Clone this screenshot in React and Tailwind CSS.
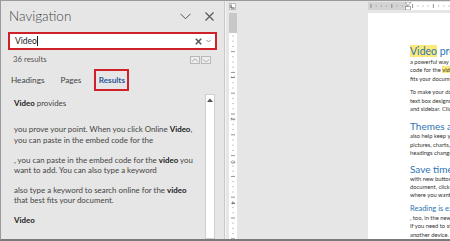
import React from 'react';

const font = { fontFamily: 'Lato, "Open Sans", sans-serif' };

function VRuler() {
  const ticks = [];
  for (let y = 36; y < 241; y += 5.2) ticks.push(y);
  return (
    <svg width="8" height="228" viewBox="0 0 8 228" className="block overflow-visible">
      <rect x="0" y="0" width="8" height="228" fill="#ffffff" />
      <rect x="0" y="0" width="8" height="20" fill="#c8c8c8" />
      {ticks.map((t, i) => (
        <line key={i} x1={i % 4 === 3 ? 2 : 3.5} x2={i % 4 === 3 ? 6 : 4.5} y1={t - 13} y2={t - 13} stroke="#777" strokeWidth="0.8" />
      ))}
      {[['1', 64], ['2', 106], ['3', 149], ['4', 190]].map(([n, y]) => (
        <text key={n} x="4" y={y + 2} fontSize="5.5" fill="#444" textAnchor="middle" transform={`rotate(90 4 ${y})`} style={font}>{n}</text>
      ))}
    </svg>
  );
}

function HRuler() {
  const ticks = [];
  for (let x = 3; x < 82; x += 5.2) ticks.push(x);
  return (
    <svg width="82" height="8" viewBox="0 0 82 8" className="block">
      <rect x="0" y="0" width="82" height="8" fill="#ffffff" />
      <rect x="0" y="0" width="40" height="8" fill="#d4d4d4" />
      {ticks.map((t, i) => (
        <line key={i} x1={t} x2={t} y1={i % 4 === 0 ? 2 : 3.5} y2={i % 4 === 0 ? 6 : 4.5} stroke="#777" strokeWidth="0.8" />
      ))}
      <path d="M37 0 L43 0 L40 4 Z" fill="#fff" stroke="#777" strokeWidth="0.6" />
      <rect x="37.5" y="4.5" width="5" height="3.5" fill="#fff" stroke="#777" strokeWidth="0.6" />
    </svg>
  );
}

function Hi({ children }) {
  return <span className="bg-[#fbe97a]">{children}</span>;
}

function NavPane() {
  return (
    <div className="w-[224px] shrink-0 flex flex-col bg-[#e6e6e6] border-r border-[#c9c9c9] overflow-hidden" style={font}>
      {/* header */}
      <div className="h-[31px] shrink-0 flex items-center justify-between pl-[8px] pr-[10px]">
        <span className="text-[13.5px] font-light text-[#444] leading-none">Navigation</span>
        <div className="flex items-center gap-[14px] text-[#555]">
          <svg width="11" height="7" viewBox="0 0 11 7"><path d="M0.5 0.8 L5.5 5.8 L10.5 0.8" fill="none" stroke="#555" strokeWidth="1" /></svg>
          <svg width="9" height="9" viewBox="0 0 9 9"><path d="M0.5 0.5 L8.5 8.5 M8.5 0.5 L0.5 8.5" fill="none" stroke="#555" strokeWidth="1.1" /></svg>
        </div>
      </div>

      {/* search */}
      <div className="mx-[7px] h-[18px] shrink-0 border-2 border-[#d0202a] bg-white flex items-center pl-[5px] pr-[4px]">
        <span className="text-[8.5px] text-[#222] leading-none">Video</span>
        <span className="w-px h-[10px] bg-[#222]" />
        <span className="flex-1" />
        <svg width="7" height="7" viewBox="0 0 7 7"><path d="M0.8 0.8 L6.2 6.2 M6.2 0.8 L0.8 6.2" stroke="#555" strokeWidth="1.6" /></svg>
        <svg width="5" height="4" viewBox="0 0 5 4" className="ml-[4px]"><path d="M0.5 1 L2.5 3 L4.5 1" fill="none" stroke="#777" strokeWidth="0.8" /></svg>
      </div>

      {/* results count */}
      <div className="h-[18px] shrink-0 flex items-center justify-between pl-[12px] pr-[13px] mt-[1px]">
        <span className="text-[7.8px] text-[#555]">36 results</span>
        <div className="flex gap-[1px]">
          {['M1 5 L5 1.5 L9 5', 'M1 2 L5 5.5 L9 2'].map((d) => (
            <div key={d} className="w-[10px] h-[8px] border border-[#b8b8b8] bg-[#eee] flex items-center justify-center">
              <svg width="10" height="7" viewBox="0 0 10 7"><path d={d} fill="none" stroke="#999" strokeWidth="0.9" /></svg>
            </div>
          ))}
        </div>
      </div>

      {/* tabs */}
      <div className="h-[22px] shrink-0 flex items-center pl-[10px] text-[8.2px] text-[#444]">
        <span>Headings</span>
        <span className="ml-[16px]">Pages</span>
        <span className="ml-[13px] h-[22px] w-[35px] flex items-center justify-center border-2 border-[#d0202a] font-bold text-[#2b579a]">Results</span>
      </div>

      {/* list */}
      <div className="flex-1 min-h-0 flex pt-[3px] pr-[9px]">
        <div className="flex-1 pl-[13px] pr-[4px] pt-[4px] text-[7.9px] leading-[10.5px] text-[#444] whitespace-nowrap overflow-hidden">
          <p><b className="text-[#222]">Video</b> provides</p>
          <p className="mt-[15.5px]">you prove your point. When you click Online <b className="text-[#222]">Video</b>,</p>
          <p>you can paste in the embed code for the</p>
          <p className="mt-[9.5px]">, you can paste in the embed code for the <b className="text-[#222]">video</b> you</p>
          <p>want to add. You can also type a keyword</p>
          <p className="mt-[9px]">also type a keyword to search online for the <b className="text-[#222]">video</b></p>
          <p>that best fits your document.</p>
          <p className="mt-[9.5px]"><b className="text-[#222]">Video</b></p>
        </div>
        <div className="w-[10px] bg-white border border-[#cfcfcf] flex flex-col">
          <div className="h-[9px] flex items-center justify-center">
            <svg width="6" height="4" viewBox="0 0 6 4"><path d="M0 4 L3 0.5 L6 4 Z" fill="#555" /></svg>
          </div>
        </div>
      </div>
    </div>
  );
}

function Page() {
  const body = 'text-[5.8px] leading-[8.4px] text-[#333] whitespace-nowrap';
  return (
    <div className="flex-1 bg-white pl-[42px] pt-[32px] overflow-hidden" style={font}>
      <div className="text-[10.5px] leading-[13px] text-[#2e74b5] whitespace-nowrap"><Hi>Video</Hi> provides</div>
      <div className={body}>a powerful way to help you</div>
      <div className={body}>code for the <Hi>video</Hi> you want</div>
      <div className={body}>fits your document.</div>
      <div className={`${body} mt-[5px]`}>To make your document look</div>
      <div className={body}>text box designs that comple</div>
      <div className={body}>and sidebar. Click Insert</div>
      <div className="mt-[7px] text-[10px] leading-[12px] text-[#2e74b5] whitespace-nowrap">Themes and styles</div>
      <div className={body}>also help keep your document</div>
      <div className={body}>pictures, charts, and SmartArt</div>
      <div className={body}>headings change to match</div>
      <div className="mt-[5px] text-[10px] leading-[12px] text-[#2e74b5] whitespace-nowrap">Save time in Word</div>
      <div className={body}>with new buttons that show</div>
      <div className={body}>document, click where you</div>
      <div className={body}>where you want to add</div>
      <div className="mt-[4px] text-[7.5px] leading-[10px] text-[#2e74b5] whitespace-nowrap">Reading is easier</div>
      <div className={body}>, too, in the new Reading</div>
      <div className={body}>If you need to stop reading</div>
      <div className={body}>another device.</div>
    </div>
  );
}

export default function App() {
  return (
    <div className="w-[450px] h-[241px] flex overflow-hidden bg-[#e6e6e6] border-t border-l border-[#9a9a9a] border-b-2 border-b-[#7a7a7a]">
      <NavPane />
      <div className="w-[14px] shrink-0 flex flex-col items-center bg-[#e6e6e6] border-l border-[#f4f4f4]">
        <div className="mt-[2px] w-[7px] h-[7px] bg-white border border-[#bbb] flex items-end justify-center">
          <svg width="5" height="5" viewBox="0 0 5 5"><path d="M1 0.5 L1 4 L4.5 4" fill="none" stroke="#444" strokeWidth="1" /></svg>
        </div>
        <div className="mt-[3px]"><VRuler /></div>
      </div>
      <div className="flex-1 flex flex-col">
        <div className="h-[11px] flex pt-[1px] pl-[129px]">
          <HRuler />
        </div>
        <div className="flex-1 flex pl-[129px] pt-[1px]">
          <Page />
        </div>
      </div>
    </div>
  );
}
